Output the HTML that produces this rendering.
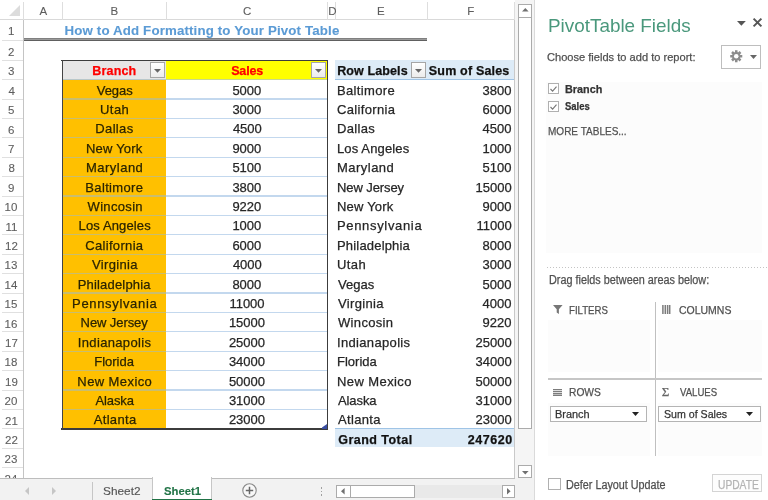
<!DOCTYPE html><html><head><meta charset="utf-8"><title>Pivot Table</title><style>
html,body{margin:0;padding:0;}
body{width:768px;height:500px;overflow:hidden;background:#fff;position:relative;font-family:"Liberation Sans",sans-serif;}
div{position:absolute;box-sizing:border-box;white-space:nowrap;}
svg{position:absolute;overflow:visible;}
.t{transform-origin:0 50%;-webkit-text-stroke:0.25px currentColor;}
#w{left:0;top:0;width:768px;height:500px;overflow:hidden;background:#fff;filter:blur(0.4px);}
</style></head><body><div id="w">
<div style="left:0.00px;top:19.00px;width:514.50px;height:1.20px;background:#d9d9d9;"></div>
<div style="left:22.90px;top:19.60px;width:1.20px;height:458.40px;background:#c4c4c4;"></div>
<svg style="left:9.00px;top:5.00px" width="12" height="12"><polygon points="11,0 11,11 0,11" fill="#dcdcdc"/></svg>
<div style="left:23.00px;top:2.00px;width:1.00px;height:17.60px;background:#dedede;"></div>
<div style="left:61.70px;top:2.00px;width:1.00px;height:17.60px;background:#dedede;"></div>
<div style="left:165.50px;top:2.00px;width:1.00px;height:17.60px;background:#dedede;"></div>
<div style="left:327.30px;top:2.00px;width:1.00px;height:17.60px;background:#dedede;"></div>
<div style="left:334.50px;top:2.00px;width:1.00px;height:17.60px;background:#dedede;"></div>
<div style="left:426.50px;top:2.00px;width:1.00px;height:17.60px;background:#dedede;"></div>
<div style="left:514.00px;top:2.00px;width:1.00px;height:17.60px;background:#dedede;"></div>
<div class="t" style="left:39.60px;top:6px;color:#5e5e5e;font-size:11.5px;line-height:11.5px;-webkit-text-stroke-width:0.1px;">A</div>
<div class="t" style="left:110.40px;top:6px;color:#5e5e5e;font-size:11.5px;line-height:11.5px;-webkit-text-stroke-width:0.1px;">B</div>
<div class="t" style="left:243.00px;top:6px;color:#5e5e5e;font-size:11.5px;line-height:11.5px;-webkit-text-stroke-width:0.1px;">C</div>
<div class="t" style="left:328.20px;top:6px;color:#5e5e5e;font-size:11.5px;line-height:11.5px;-webkit-text-stroke-width:0.1px;">D</div>
<div class="t" style="left:376.90px;top:6px;color:#5e5e5e;font-size:11.5px;line-height:11.5px;-webkit-text-stroke-width:0.1px;">E</div>
<div class="t" style="left:467.20px;top:6px;color:#5e5e5e;font-size:11.5px;line-height:11.5px;-webkit-text-stroke-width:0.1px;">F</div>
<div class="t" style="left:8.00px;top:26px;color:#5e5e5e;font-size:11.5px;line-height:11.5px;-webkit-text-stroke-width:0.1px;">1</div>
<div style="left:1.50px;top:40.35px;width:21.30px;height:1.00px;background:#e0e0e0;"></div>
<div class="t" style="left:8.00px;top:47px;color:#5e5e5e;font-size:11.5px;line-height:11.5px;-webkit-text-stroke-width:0.1px;">2</div>
<div style="left:1.50px;top:59.75px;width:21.30px;height:1.00px;background:#e0e0e0;"></div>
<div class="t" style="left:8.00px;top:66px;color:#5e5e5e;font-size:11.5px;line-height:11.5px;-webkit-text-stroke-width:0.1px;">3</div>
<div style="left:1.50px;top:79.15px;width:21.30px;height:1.00px;background:#e0e0e0;"></div>
<div class="t" style="left:8.50px;top:86px;color:#5e5e5e;font-size:11.5px;line-height:11.5px;-webkit-text-stroke-width:0.1px;">4</div>
<div style="left:1.50px;top:98.55px;width:21.30px;height:1.00px;background:#e0e0e0;"></div>
<div class="t" style="left:8.00px;top:105px;color:#5e5e5e;font-size:11.5px;line-height:11.5px;-webkit-text-stroke-width:0.1px;">5</div>
<div style="left:1.50px;top:117.95px;width:21.30px;height:1.00px;background:#e0e0e0;"></div>
<div class="t" style="left:8.00px;top:125px;color:#5e5e5e;font-size:11.5px;line-height:11.5px;-webkit-text-stroke-width:0.1px;">6</div>
<div style="left:1.50px;top:137.35px;width:21.30px;height:1.00px;background:#e0e0e0;"></div>
<div class="t" style="left:8.00px;top:144px;color:#5e5e5e;font-size:11.5px;line-height:11.5px;-webkit-text-stroke-width:0.1px;">7</div>
<div style="left:1.50px;top:156.75px;width:21.30px;height:1.00px;background:#e0e0e0;"></div>
<div class="t" style="left:8.50px;top:163px;color:#5e5e5e;font-size:11.5px;line-height:11.5px;-webkit-text-stroke-width:0.1px;">8</div>
<div style="left:1.50px;top:176.15px;width:21.30px;height:1.00px;background:#e0e0e0;"></div>
<div class="t" style="left:8.00px;top:183px;color:#5e5e5e;font-size:11.5px;line-height:11.5px;-webkit-text-stroke-width:0.1px;">9</div>
<div style="left:1.50px;top:195.55px;width:21.30px;height:1.00px;background:#e0e0e0;"></div>
<div class="t" style="left:4.50px;top:202px;color:#5e5e5e;font-size:11.5px;line-height:11.5px;-webkit-text-stroke-width:0.1px;">10</div>
<div style="left:1.50px;top:214.95px;width:21.30px;height:1.00px;background:#e0e0e0;"></div>
<div class="t" style="left:5.50px;top:222px;color:#5e5e5e;font-size:11.5px;line-height:11.5px;-webkit-text-stroke-width:0.1px;">11</div>
<div style="left:1.50px;top:234.35px;width:21.30px;height:1.00px;background:#e0e0e0;"></div>
<div class="t" style="left:5.00px;top:241px;color:#5e5e5e;font-size:11.5px;line-height:11.5px;-webkit-text-stroke-width:0.1px;">12</div>
<div style="left:1.50px;top:253.75px;width:21.30px;height:1.00px;background:#e0e0e0;"></div>
<div class="t" style="left:4.50px;top:260px;color:#5e5e5e;font-size:11.5px;line-height:11.5px;-webkit-text-stroke-width:0.1px;">13</div>
<div style="left:1.50px;top:273.15px;width:21.30px;height:1.00px;background:#e0e0e0;"></div>
<div class="t" style="left:4.50px;top:280px;color:#5e5e5e;font-size:11.5px;line-height:11.5px;-webkit-text-stroke-width:0.1px;">14</div>
<div style="left:1.50px;top:292.55px;width:21.30px;height:1.00px;background:#e0e0e0;"></div>
<div class="t" style="left:4.50px;top:299px;color:#5e5e5e;font-size:11.5px;line-height:11.5px;-webkit-text-stroke-width:0.1px;">15</div>
<div style="left:1.50px;top:311.95px;width:21.30px;height:1.00px;background:#e0e0e0;"></div>
<div class="t" style="left:4.50px;top:319px;color:#5e5e5e;font-size:11.5px;line-height:11.5px;-webkit-text-stroke-width:0.1px;">16</div>
<div style="left:1.50px;top:331.35px;width:21.30px;height:1.00px;background:#e0e0e0;"></div>
<div class="t" style="left:5.00px;top:338px;color:#5e5e5e;font-size:11.5px;line-height:11.5px;-webkit-text-stroke-width:0.1px;">17</div>
<div style="left:1.50px;top:350.75px;width:21.30px;height:1.00px;background:#e0e0e0;"></div>
<div class="t" style="left:4.50px;top:357px;color:#5e5e5e;font-size:11.5px;line-height:11.5px;-webkit-text-stroke-width:0.1px;">18</div>
<div style="left:1.50px;top:370.15px;width:21.30px;height:1.00px;background:#e0e0e0;"></div>
<div class="t" style="left:5.00px;top:377px;color:#5e5e5e;font-size:11.5px;line-height:11.5px;-webkit-text-stroke-width:0.1px;">19</div>
<div style="left:1.50px;top:389.55px;width:21.30px;height:1.00px;background:#e0e0e0;"></div>
<div class="t" style="left:4.50px;top:396px;color:#5e5e5e;font-size:11.5px;line-height:11.5px;-webkit-text-stroke-width:0.1px;">20</div>
<div style="left:1.50px;top:408.95px;width:21.30px;height:1.00px;background:#e0e0e0;"></div>
<div class="t" style="left:5.00px;top:416px;color:#5e5e5e;font-size:11.5px;line-height:11.5px;-webkit-text-stroke-width:0.1px;">21</div>
<div style="left:1.50px;top:428.35px;width:21.30px;height:1.00px;background:#e0e0e0;"></div>
<div class="t" style="left:5.00px;top:435px;color:#5e5e5e;font-size:11.5px;line-height:11.5px;-webkit-text-stroke-width:0.1px;">22</div>
<div style="left:1.50px;top:447.75px;width:21.30px;height:1.00px;background:#e0e0e0;"></div>
<div class="t" style="left:4.50px;top:454px;color:#5e5e5e;font-size:11.5px;line-height:11.5px;-webkit-text-stroke-width:0.1px;">23</div>
<div style="left:1.50px;top:467.15px;width:21.30px;height:1.00px;background:#e0e0e0;"></div>
<div class="t" style="left:4.50px;top:474px;color:#5e5e5e;font-size:11.5px;line-height:11.5px;-webkit-text-stroke-width:0.1px;">24</div>
<div style="left:514.00px;top:19.60px;width:1.00px;height:458.40px;background:#d4d4d4;"></div>
<div class="t" style="left:64.50px;top:24px;color:#5b9bd5;font-size:13.3px;line-height:13.3px;font-weight:bold;letter-spacing:0.142px;-webkit-text-stroke-width:0.1px;">How to Add Formatting to Your Pivot Table</div>
<div style="left:23.50px;top:38.00px;width:403.50px;height:1.20px;background:#808080;"></div>
<div style="left:23.50px;top:39.20px;width:403.50px;height:0.60px;background:#9a9a9a;"></div>
<div style="left:23.50px;top:39.80px;width:403.50px;height:1.40px;background:#606060;"></div>
<div style="left:62.20px;top:60.25px;width:103.80px;height:19.40px;background:#e7e6e6;"></div>
<div style="left:166.00px;top:60.25px;width:161.80px;height:19.40px;background:#ffff00;"></div>
<div class="t" style="left:92.20px;top:65px;color:#ff0000;font-size:12.5px;line-height:12.5px;font-weight:bold;letter-spacing:0.200px;">Branch</div>
<div class="t" style="left:231.20px;top:65px;color:#ff0000;font-size:12.5px;line-height:12.5px;font-weight:bold;letter-spacing:-0.175px;">Sales</div>
<div style="left:150.30px;top:62.30px;width:15px;height:15.5px;background:linear-gradient(#ffffff,#ececec);border:1px solid #a6a6a6;"></div>
<svg style="left:154.30px;top:68.60px" width="7" height="3.8"><polygon points="0,0 7,0 3.5,3.8" fill="#666"/></svg>
<div style="left:311.20px;top:62.30px;width:15px;height:15.5px;background:linear-gradient(#ffffff,#ececec);border:1px solid #a6a6a6;"></div>
<svg style="left:315.20px;top:68.60px" width="7" height="3.8"><polygon points="0,0 7,0 3.5,3.8" fill="#666"/></svg>
<div style="left:62.20px;top:79.65px;width:103.80px;height:19.70px;background:#ffc000;"></div>
<div class="t" style="left:96.70px;top:84px;color:#2b2400;font-size:13px;line-height:13px;letter-spacing:0.000px;">Vegas</div>
<div class="t" style="left:232.40px;top:84px;color:#262626;font-size:13px;line-height:13px;">5000</div>
<div style="left:62.20px;top:99.05px;width:103.80px;height:19.70px;background:#ffc000;"></div>
<div class="t" style="left:100.05px;top:103px;color:#2b2400;font-size:13px;line-height:13px;letter-spacing:0.433px;">Utah</div>
<div class="t" style="left:232.40px;top:103px;color:#262626;font-size:13px;line-height:13px;">3000</div>
<div style="left:62.20px;top:118.45px;width:103.80px;height:19.70px;background:#ffc000;"></div>
<div class="t" style="left:95.35px;top:122px;color:#2b2400;font-size:13px;line-height:13px;letter-spacing:0.340px;">Dallas</div>
<div class="t" style="left:232.90px;top:122px;color:#262626;font-size:13px;line-height:13px;">4500</div>
<div style="left:62.20px;top:137.85px;width:103.80px;height:19.70px;background:#ffc000;"></div>
<div class="t" style="left:86.05px;top:142px;color:#2b2400;font-size:13px;line-height:13px;letter-spacing:0.186px;">New York</div>
<div class="t" style="left:232.40px;top:142px;color:#262626;font-size:13px;line-height:13px;">9000</div>
<div style="left:62.20px;top:157.25px;width:103.80px;height:19.70px;background:#ffc000;"></div>
<div class="t" style="left:86.05px;top:161px;color:#2b2400;font-size:13px;line-height:13px;letter-spacing:0.471px;">Maryland</div>
<div class="t" style="left:232.40px;top:161px;color:#262626;font-size:13px;line-height:13px;">5100</div>
<div style="left:62.20px;top:176.65px;width:103.80px;height:19.70px;background:#ffc000;"></div>
<div class="t" style="left:85.35px;top:181px;color:#2b2400;font-size:13px;line-height:13px;letter-spacing:0.338px;">Baltimore</div>
<div class="t" style="left:232.40px;top:181px;color:#262626;font-size:13px;line-height:13px;">3800</div>
<div style="left:62.20px;top:196.05px;width:103.80px;height:19.70px;background:#ffc000;"></div>
<div class="t" style="left:87.55px;top:200px;color:#2b2400;font-size:13px;line-height:13px;letter-spacing:0.329px;">Wincosin</div>
<div class="t" style="left:232.40px;top:200px;color:#262626;font-size:13px;line-height:13px;">9220</div>
<div style="left:62.20px;top:215.45px;width:103.80px;height:19.70px;background:#ffc000;"></div>
<div class="t" style="left:78.55px;top:219px;color:#2b2400;font-size:13px;line-height:13px;letter-spacing:0.130px;">Los Angeles</div>
<div class="t" style="left:232.40px;top:219px;color:#262626;font-size:13px;line-height:13px;">1000</div>
<div style="left:62.20px;top:234.85px;width:103.80px;height:19.70px;background:#ffc000;"></div>
<div class="t" style="left:85.20px;top:239px;color:#2b2400;font-size:13px;line-height:13px;letter-spacing:0.333px;">California</div>
<div class="t" style="left:232.40px;top:239px;color:#262626;font-size:13px;line-height:13px;">6000</div>
<div style="left:62.20px;top:254.25px;width:103.80px;height:19.70px;background:#ffc000;"></div>
<div class="t" style="left:92.05px;top:258px;color:#2b2400;font-size:13px;line-height:13px;letter-spacing:0.329px;">Virginia</div>
<div class="t" style="left:232.90px;top:258px;color:#262626;font-size:13px;line-height:13px;">4000</div>
<div style="left:62.20px;top:273.65px;width:103.80px;height:19.70px;background:#ffc000;"></div>
<div class="t" style="left:77.70px;top:278px;color:#2b2400;font-size:13px;line-height:13px;letter-spacing:0.182px;">Philadelphia</div>
<div class="t" style="left:232.40px;top:278px;color:#262626;font-size:13px;line-height:13px;">8000</div>
<div style="left:62.20px;top:293.05px;width:103.80px;height:19.70px;background:#ffc000;"></div>
<div class="t" style="left:72.05px;top:297px;color:#2b2400;font-size:13px;line-height:13px;letter-spacing:0.664px;">Pennsylvania</div>
<div class="t" style="left:229.40px;top:297px;color:#262626;font-size:13px;line-height:13px;">11000</div>
<div style="left:62.20px;top:312.45px;width:103.80px;height:19.70px;background:#ffc000;"></div>
<div class="t" style="left:80.60px;top:316px;color:#2b2400;font-size:13px;line-height:13px;letter-spacing:-0.089px;">New Jersey</div>
<div class="t" style="left:228.90px;top:316px;color:#262626;font-size:13px;line-height:13px;">15000</div>
<div style="left:62.20px;top:331.85px;width:103.80px;height:19.70px;background:#ffc000;"></div>
<div class="t" style="left:77.85px;top:336px;color:#2b2400;font-size:13px;line-height:13px;letter-spacing:0.336px;">Indianapolis</div>
<div class="t" style="left:228.90px;top:336px;color:#262626;font-size:13px;line-height:13px;">25000</div>
<div style="left:62.20px;top:351.25px;width:103.80px;height:19.70px;background:#ffc000;"></div>
<div class="t" style="left:94.20px;top:355px;color:#2b2400;font-size:13px;line-height:13px;letter-spacing:0.000px;">Florida</div>
<div class="t" style="left:228.90px;top:355px;color:#262626;font-size:13px;line-height:13px;">34000</div>
<div style="left:62.20px;top:370.65px;width:103.80px;height:19.70px;background:#ffc000;"></div>
<div class="t" style="left:77.35px;top:375px;color:#2b2400;font-size:13px;line-height:13px;letter-spacing:0.411px;">New Mexico</div>
<div class="t" style="left:228.90px;top:375px;color:#262626;font-size:13px;line-height:13px;">50000</div>
<div style="left:62.20px;top:390.05px;width:103.80px;height:19.70px;background:#ffc000;"></div>
<div class="t" style="left:95.45px;top:394px;color:#2b2400;font-size:13px;line-height:13px;letter-spacing:-0.100px;">Alaska</div>
<div class="t" style="left:228.90px;top:394px;color:#262626;font-size:13px;line-height:13px;">31000</div>
<div style="left:62.20px;top:409.45px;width:103.80px;height:19.70px;background:#ffc000;"></div>
<div class="t" style="left:93.70px;top:413px;color:#2b2400;font-size:13px;line-height:13px;letter-spacing:0.333px;">Atlanta</div>
<div class="t" style="left:228.90px;top:413px;color:#262626;font-size:13px;line-height:13px;">23000</div>
<div style="left:62.20px;top:79.05px;width:103.80px;height:1.20px;background:#c9bd6e;"></div>
<div style="left:166.00px;top:79.05px;width:161.80px;height:1.20px;background:#c3d8ee;"></div>
<div style="left:62.20px;top:98.45px;width:103.80px;height:1.20px;background:#c9bd6e;"></div>
<div style="left:166.00px;top:98.45px;width:161.80px;height:1.20px;background:#c3d8ee;"></div>
<div style="left:62.20px;top:117.85px;width:103.80px;height:1.20px;background:#c9bd6e;"></div>
<div style="left:166.00px;top:117.85px;width:161.80px;height:1.20px;background:#c3d8ee;"></div>
<div style="left:62.20px;top:137.25px;width:103.80px;height:1.20px;background:#c9bd6e;"></div>
<div style="left:166.00px;top:137.25px;width:161.80px;height:1.20px;background:#c3d8ee;"></div>
<div style="left:62.20px;top:156.65px;width:103.80px;height:1.20px;background:#c9bd6e;"></div>
<div style="left:166.00px;top:156.65px;width:161.80px;height:1.20px;background:#c3d8ee;"></div>
<div style="left:62.20px;top:176.05px;width:103.80px;height:1.20px;background:#c9bd6e;"></div>
<div style="left:166.00px;top:176.05px;width:161.80px;height:1.20px;background:#c3d8ee;"></div>
<div style="left:62.20px;top:195.45px;width:103.80px;height:1.20px;background:#c9bd6e;"></div>
<div style="left:166.00px;top:195.45px;width:161.80px;height:1.20px;background:#c3d8ee;"></div>
<div style="left:62.20px;top:214.85px;width:103.80px;height:1.20px;background:#c9bd6e;"></div>
<div style="left:166.00px;top:214.85px;width:161.80px;height:1.20px;background:#c3d8ee;"></div>
<div style="left:62.20px;top:234.25px;width:103.80px;height:1.20px;background:#c9bd6e;"></div>
<div style="left:166.00px;top:234.25px;width:161.80px;height:1.20px;background:#c3d8ee;"></div>
<div style="left:62.20px;top:253.65px;width:103.80px;height:1.20px;background:#c9bd6e;"></div>
<div style="left:166.00px;top:253.65px;width:161.80px;height:1.20px;background:#c3d8ee;"></div>
<div style="left:62.20px;top:273.05px;width:103.80px;height:1.20px;background:#c9bd6e;"></div>
<div style="left:166.00px;top:273.05px;width:161.80px;height:1.20px;background:#c3d8ee;"></div>
<div style="left:62.20px;top:292.45px;width:103.80px;height:1.20px;background:#c9bd6e;"></div>
<div style="left:166.00px;top:292.45px;width:161.80px;height:1.20px;background:#c3d8ee;"></div>
<div style="left:62.20px;top:311.85px;width:103.80px;height:1.20px;background:#c9bd6e;"></div>
<div style="left:166.00px;top:311.85px;width:161.80px;height:1.20px;background:#c3d8ee;"></div>
<div style="left:62.20px;top:331.25px;width:103.80px;height:1.20px;background:#c9bd6e;"></div>
<div style="left:166.00px;top:331.25px;width:161.80px;height:1.20px;background:#c3d8ee;"></div>
<div style="left:62.20px;top:350.65px;width:103.80px;height:1.20px;background:#c9bd6e;"></div>
<div style="left:166.00px;top:350.65px;width:161.80px;height:1.20px;background:#c3d8ee;"></div>
<div style="left:62.20px;top:370.05px;width:103.80px;height:1.20px;background:#c9bd6e;"></div>
<div style="left:166.00px;top:370.05px;width:161.80px;height:1.20px;background:#c3d8ee;"></div>
<div style="left:62.20px;top:389.45px;width:103.80px;height:1.20px;background:#c9bd6e;"></div>
<div style="left:166.00px;top:389.45px;width:161.80px;height:1.20px;background:#c3d8ee;"></div>
<div style="left:62.20px;top:408.85px;width:103.80px;height:1.20px;background:#c9bd6e;"></div>
<div style="left:166.00px;top:408.85px;width:161.80px;height:1.20px;background:#c3d8ee;"></div>
<div style="left:62.20px;top:79.05px;width:103.80px;height:1.20px;background:#b9c7c9;"></div>
<div style="left:166.00px;top:79.05px;width:161.80px;height:1.20px;background:#c8d890;"></div>
<div style="left:61.40px;top:59.75px;width:266.90px;height:1.70px;background:#3c3c3c;"></div>
<div style="left:61.40px;top:427.95px;width:266.90px;height:1.60px;background:#3c3c3c;"></div>
<div style="left:61.50px;top:59.75px;width:1.40px;height:369.80px;background:#444;"></div>
<div style="left:326.50px;top:59.75px;width:1.80px;height:369.80px;background:#3c3c3c;"></div>
<svg style="left:322.40px;top:423.85px" width="5" height="5"><polygon points="5,0 5,5 0,5 0,3.5" fill="#3a4fa3"/></svg>
<div style="left:334.50px;top:59.95px;width:180.00px;height:19.70px;background:#ddebf7;"></div>
<div style="left:334.50px;top:78.95px;width:180.00px;height:1.30px;background:#9fc4e6;"></div>
<div class="t" style="left:337.20px;top:65px;color:#111;font-size:12.5px;line-height:12.5px;font-weight:bold;letter-spacing:0.111px;">Row Labels</div>
<div class="t" style="left:428.80px;top:65px;color:#111;font-size:12.5px;line-height:12.5px;font-weight:bold;letter-spacing:0.182px;">Sum of Sales</div>
<div style="left:411.00px;top:62.30px;width:15px;height:15.5px;background:linear-gradient(#ffffff,#ececec);border:1px solid #a6a6a6;"></div>
<svg style="left:415.00px;top:68.60px" width="7" height="3.8"><polygon points="0,0 7,0 3.5,3.8" fill="#666"/></svg>
<div class="t" style="left:337.00px;top:84px;color:#262626;font-size:13px;line-height:13px;letter-spacing:0.338px;">Baltimore</div>
<div class="t" style="left:482.50px;top:84px;color:#262626;font-size:13px;line-height:13px;">3800</div>
<div class="t" style="left:337.00px;top:103px;color:#262626;font-size:13px;line-height:13px;letter-spacing:0.333px;">California</div>
<div class="t" style="left:482.50px;top:103px;color:#262626;font-size:13px;line-height:13px;">6000</div>
<div class="t" style="left:337.00px;top:122px;color:#262626;font-size:13px;line-height:13px;letter-spacing:0.340px;">Dallas</div>
<div class="t" style="left:482.50px;top:122px;color:#262626;font-size:13px;line-height:13px;">4500</div>
<div class="t" style="left:337.00px;top:142px;color:#262626;font-size:13px;line-height:13px;letter-spacing:0.130px;">Los Angeles</div>
<div class="t" style="left:482.50px;top:142px;color:#262626;font-size:13px;line-height:13px;">1000</div>
<div class="t" style="left:337.00px;top:161px;color:#262626;font-size:13px;line-height:13px;letter-spacing:0.471px;">Maryland</div>
<div class="t" style="left:482.50px;top:161px;color:#262626;font-size:13px;line-height:13px;">5100</div>
<div class="t" style="left:337.00px;top:181px;color:#262626;font-size:13px;line-height:13px;letter-spacing:-0.089px;">New Jersey</div>
<div class="t" style="left:475.50px;top:181px;color:#262626;font-size:13px;line-height:13px;">15000</div>
<div class="t" style="left:337.00px;top:200px;color:#262626;font-size:13px;line-height:13px;letter-spacing:0.186px;">New York</div>
<div class="t" style="left:482.50px;top:200px;color:#262626;font-size:13px;line-height:13px;">9000</div>
<div class="t" style="left:337.00px;top:219px;color:#262626;font-size:13px;line-height:13px;letter-spacing:0.664px;">Pennsylvania</div>
<div class="t" style="left:476.50px;top:219px;color:#262626;font-size:13px;line-height:13px;">11000</div>
<div class="t" style="left:337.00px;top:239px;color:#262626;font-size:13px;line-height:13px;letter-spacing:0.182px;">Philadelphia</div>
<div class="t" style="left:482.50px;top:239px;color:#262626;font-size:13px;line-height:13px;">8000</div>
<div class="t" style="left:337.00px;top:258px;color:#262626;font-size:13px;line-height:13px;letter-spacing:0.433px;">Utah</div>
<div class="t" style="left:482.50px;top:258px;color:#262626;font-size:13px;line-height:13px;">3000</div>
<div class="t" style="left:338.00px;top:278px;color:#262626;font-size:13px;line-height:13px;letter-spacing:0.000px;">Vegas</div>
<div class="t" style="left:482.50px;top:278px;color:#262626;font-size:13px;line-height:13px;">5000</div>
<div class="t" style="left:338.00px;top:297px;color:#262626;font-size:13px;line-height:13px;letter-spacing:0.329px;">Virginia</div>
<div class="t" style="left:482.50px;top:297px;color:#262626;font-size:13px;line-height:13px;">4000</div>
<div class="t" style="left:338.00px;top:316px;color:#262626;font-size:13px;line-height:13px;letter-spacing:0.329px;">Wincosin</div>
<div class="t" style="left:482.50px;top:316px;color:#262626;font-size:13px;line-height:13px;">9220</div>
<div class="t" style="left:337.00px;top:336px;color:#262626;font-size:13px;line-height:13px;letter-spacing:0.336px;">Indianapolis</div>
<div class="t" style="left:475.50px;top:336px;color:#262626;font-size:13px;line-height:13px;">25000</div>
<div class="t" style="left:337.00px;top:355px;color:#262626;font-size:13px;line-height:13px;letter-spacing:0.000px;">Florida</div>
<div class="t" style="left:475.50px;top:355px;color:#262626;font-size:13px;line-height:13px;">34000</div>
<div class="t" style="left:337.00px;top:375px;color:#262626;font-size:13px;line-height:13px;letter-spacing:0.411px;">New Mexico</div>
<div class="t" style="left:475.50px;top:375px;color:#262626;font-size:13px;line-height:13px;">50000</div>
<div class="t" style="left:338.00px;top:394px;color:#262626;font-size:13px;line-height:13px;letter-spacing:-0.100px;">Alaska</div>
<div class="t" style="left:475.50px;top:394px;color:#262626;font-size:13px;line-height:13px;">31000</div>
<div class="t" style="left:338.00px;top:413px;color:#262626;font-size:13px;line-height:13px;letter-spacing:0.333px;">Atlanta</div>
<div class="t" style="left:475.50px;top:413px;color:#262626;font-size:13px;line-height:13px;">23000</div>
<div style="left:334.50px;top:428.85px;width:180.00px;height:18.60px;background:#ddebf7;"></div>
<div style="left:334.50px;top:428.25px;width:180.00px;height:1.20px;background:#9fc4e6;"></div>
<div class="t" style="left:338.20px;top:434px;color:#111;font-size:12.5px;line-height:12.5px;font-weight:bold;letter-spacing:0.470px;">Grand Total</div>
<div class="t" style="left:467.80px;top:434px;color:#111;font-size:12.5px;line-height:12.5px;font-weight:bold;letter-spacing:0.540px;">247620</div>
<div style="left:0.00px;top:478.00px;width:535.00px;height:22.00px;background:#f2f2f2;"></div>
<div style="left:0.00px;top:477.70px;width:515.00px;height:1.30px;background:#bdbdbd;"></div>
<div style="left:151.50px;top:477.30px;width:60.50px;height:22.70px;background:#fff;border-left:1px solid #c6c6c6;border-right:1px solid #c6c6c6;"></div>
<div style="left:151.50px;top:498.90px;width:60.50px;height:1.10px;background:#217346;"></div>
<div style="left:92.00px;top:481.50px;width:1.00px;height:18.50px;background:#c6c6c6;"></div>
<div class="t" style="left:103.47px;top:486px;color:#555;font-size:11.5px;line-height:11.5px;transform:scaleX(1.0286);-webkit-text-stroke-width:0.15px;">Sheet2</div>
<div class="t" style="left:163.80px;top:486px;color:#217346;font-size:11.5px;line-height:11.5px;font-weight:bold;transform:scaleX(0.9842);-webkit-text-stroke-width:0.1px;">Sheet1</div>
<svg style="left:24.50px;top:486.50px" width="4" height="8"><polygon points="4,0 4,8 0,4" fill="#c6c6c6"/></svg>
<svg style="left:51.50px;top:486.50px" width="4" height="8"><polygon points="0,0 0,8 4,4" fill="#c6c6c6"/></svg>
<svg style="left:242.00px;top:483.20px" width="15" height="15"><circle cx="7.5" cy="7.5" r="6.7" fill="#f8f8f8" stroke="#8a8a8a" stroke-width="1.1"/><path d="M3.8 7.5H11.2M7.5 3.8V11.2" stroke="#686868" stroke-width="1.5" fill="none"/></svg>
<div style="left:320.50px;top:487.00px;width:1.80px;height:1.80px;background:#a0a0a0;"></div>
<div style="left:320.50px;top:490.50px;width:1.80px;height:1.80px;background:#a0a0a0;"></div>
<div style="left:320.50px;top:494.00px;width:1.80px;height:1.80px;background:#a0a0a0;"></div>
<div style="left:336.00px;top:484.80px;width:179.00px;height:13.00px;background:#e9e9e9;"></div>
<div style="left:336.00px;top:484.80px;width:14.50px;height:13.00px;background:#fff;border:1px solid #ababab;"></div>
<div style="left:350.00px;top:484.80px;width:64.50px;height:13.00px;background:#fff;border:1px solid #ababab;"></div>
<div style="left:501.50px;top:484.80px;width:13.50px;height:13.00px;background:#fff;border:1px solid #ababab;"></div>
<svg style="left:341.20px;top:488.20px" width="3.6" height="6.4"><polygon points="3.6,0 3.6,6.4 0,3.2" fill="#707070"/></svg>
<svg style="left:506.80px;top:488.20px" width="3.6" height="6.4"><polygon points="0,0 0,6.4 3.6,3.2" fill="#707070"/></svg>
<div style="left:515.00px;top:0.00px;width:20.00px;height:478.00px;background:#f5f5f5;"></div>
<div style="left:513.90px;top:19.60px;width:1.20px;height:458.40px;background:#c9c9c9;"></div>
<div style="left:518.20px;top:3.50px;width:14.00px;height:14.00px;background:#fff;border:1px solid #ababab;"></div>
<div style="left:518.20px;top:16.50px;width:14.00px;height:412.00px;background:#fff;border:1px solid #ababab;"></div>
<div style="left:518.20px;top:465.00px;width:14.00px;height:13.00px;background:#fff;border:1px solid #ababab;"></div>
<svg style="left:521.90px;top:8.40px" width="6.6" height="3.5"><polygon points="0,3.5 6.6,3.5 3.3,0" fill="#707070"/></svg>
<svg style="left:521.90px;top:470.70px" width="6.6" height="3.5"><polygon points="0,0 6.6,0 3.3,3.5" fill="#707070"/></svg>
<div style="left:534.20px;top:0.00px;width:1.00px;height:500.00px;background:#dadada;"></div>
<div style="left:535.20px;top:0.00px;width:233.00px;height:500.00px;background:#fff;"></div>
<div class="t" style="left:547.78px;top:17px;color:#4a987c;font-size:18.5px;line-height:18.5px;transform:scaleX(1.0203);-webkit-text-stroke-width:0px;">PivotTable Fields</div>
<svg style="left:737.20px;top:21.00px" width="9" height="5"><polygon points="0,0 8.8,0 4.4,4.7" fill="#555"/></svg>
<svg style="left:753.30px;top:18.30px" width="9" height="9"><path d="M0.6 0.6L8.4 8.4M8.4 0.6L0.6 8.4" stroke="#555" stroke-width="2" fill="none"/></svg>
<div class="t" style="left:546.84px;top:52px;color:#505050;font-size:11.5px;line-height:11.5px;transform:scaleX(0.9638);">Choose fields to add to report:</div>
<div style="left:720.60px;top:44.80px;width:40.80px;height:24.40px;background:#fff;border:1.3px solid #bebebe;"></div>
<svg style="left:729.7px;top:50.2px" width="12.5" height="12.5" viewBox="-5.5 -5.5 11 11"><g fill="#8c8c8c"><circle r="3.7"/><rect x="-1.1" y="-5.3" width="2.2" height="3" transform="rotate(0)"/><rect x="-1.1" y="-5.3" width="2.2" height="3" transform="rotate(45)"/><rect x="-1.1" y="-5.3" width="2.2" height="3" transform="rotate(90)"/><rect x="-1.1" y="-5.3" width="2.2" height="3" transform="rotate(135)"/><rect x="-1.1" y="-5.3" width="2.2" height="3" transform="rotate(180)"/><rect x="-1.1" y="-5.3" width="2.2" height="3" transform="rotate(225)"/><rect x="-1.1" y="-5.3" width="2.2" height="3" transform="rotate(270)"/><rect x="-1.1" y="-5.3" width="2.2" height="3" transform="rotate(315)"/></g><circle r="2.0" fill="#fff"/></svg>
<svg style="left:750.00px;top:55.20px" width="7" height="4"><polygon points="0,0 7,0 3.5,3.9" fill="#666"/></svg>
<div style="left:545.80px;top:81.50px;width:216.20px;height:171.30px;background:#fcfcfc;"></div>
<div style="left:547.60px;top:83.30px;width:11.50px;height:11.00px;background:#fff;border:1px solid #b0b0b0;"></div>
<svg style="left:549.80px;top:85.80px" width="7" height="6"><path d="M0.5 3L2.6 5.2L6.5 0.6" stroke="#777" stroke-width="1.1" fill="none"/></svg>
<div style="left:547.60px;top:101.00px;width:11.50px;height:11.00px;background:#fff;border:1px solid #b0b0b0;"></div>
<svg style="left:549.80px;top:103.50px" width="7" height="6"><path d="M0.5 3L2.6 5.2L6.5 0.6" stroke="#777" stroke-width="1.1" fill="none"/></svg>
<div class="t" style="left:564.92px;top:84px;color:#333;font-size:11px;line-height:11px;font-weight:bold;transform:scaleX(0.9833);">Branch</div>
<div class="t" style="left:565.40px;top:101px;color:#333;font-size:11px;line-height:11px;font-weight:bold;transform:scaleX(0.8621);">Sales</div>
<div class="t" style="left:547.53px;top:126px;color:#505050;font-size:11.5px;line-height:11.5px;transform:scaleX(0.8708);">MORE TABLES...</div>
<div style="left:547.40px;top:267.00px;width:220.60px;height:1.00px;background:repeating-linear-gradient(90deg,#c4c4c4 0 1px,transparent 1px 3px);"></div>
<div class="t" style="left:549.40px;top:274px;color:#505050;font-size:12px;line-height:12px;transform:scaleX(0.9029);">Drag fields between areas below:</div>
<div style="left:548.40px;top:320.20px;width:101.20px;height:52.20px;background:#fcfcfc;"></div>
<div style="left:658.30px;top:320.20px;width:103.70px;height:52.20px;background:#fcfcfc;"></div>
<div style="left:548.40px;top:403.00px;width:101.20px;height:52.50px;background:#fcfcfc;"></div>
<div style="left:658.30px;top:403.00px;width:103.70px;height:52.50px;background:#fcfcfc;"></div>
<div style="left:654.70px;top:301.50px;width:1.00px;height:154.00px;background:#c0c0c0;"></div>
<div style="left:548.40px;top:378.20px;width:213.60px;height:1.40px;background:#c6c6c6;"></div>
<div class="t" style="left:568.76px;top:305px;color:#505050;font-size:11.5px;line-height:11.5px;transform:scaleX(0.8378);">FILTERS</div>
<div class="t" style="left:678.59px;top:305px;color:#505050;font-size:11.5px;line-height:11.5px;transform:scaleX(0.9107);">COLUMNS</div>
<div class="t" style="left:568.71px;top:387px;color:#505050;font-size:11.5px;line-height:11.5px;transform:scaleX(0.8912);">ROWS</div>
<div class="t" style="left:679.80px;top:387px;color:#505050;font-size:11.5px;line-height:11.5px;transform:scaleX(0.8341);">VALUES</div>
<svg style="left:552.80px;top:305.00px" width="10" height="9"><path d="M0 0H9.6L5.9 4.2V9L3.7 7.6V4.2Z" fill="#777"/></svg>
<svg style="left:661.70px;top:305.00px" width="9" height="9"><path d="M0.9 0V9M3.3 0V9M5.6 0V9M7.7 0V9" stroke="#7c7c7c" stroke-width="1.5" fill="none"/></svg>
<svg style="left:553.40px;top:388.60px" width="9" height="7"><path d="M0 0.7H9M0 2.6H9M0 4.5H9M0 6.4H9" stroke="#7c7c7c" stroke-width="1.25" fill="none"/></svg>
<div class="t" style="left:661.80px;top:385px;color:#666;font-size:13px;line-height:13px;font-family:'Liberation Serif',serif;">Σ</div>
<div style="left:549.50px;top:405.70px;width:97.80px;height:16.40px;background:#fff;border:1px solid #b4b4b4;"></div>
<div style="left:658.20px;top:405.70px;width:103.00px;height:16.40px;background:#fff;border:1px solid #b4b4b4;"></div>
<div class="t" style="left:555.25px;top:409px;color:#333;font-size:11.5px;line-height:11.5px;transform:scaleX(0.9514);">Branch</div>
<div class="t" style="left:664.28px;top:409px;color:#333;font-size:11.5px;line-height:11.5px;transform:scaleX(0.9224);">Sum of Sales</div>
<svg style="left:632.00px;top:411.50px" width="7" height="4"><polygon points="0,0 7,0 3.5,4" fill="#222"/></svg>
<svg style="left:745.80px;top:411.50px" width="7" height="4"><polygon points="0,0 7,0 3.5,4" fill="#222"/></svg>
<div style="left:548.30px;top:478.30px;width:12.50px;height:11.50px;background:#fff;border:1px solid #b0b0b0;"></div>
<div class="t" style="left:566.30px;top:479px;color:#505050;font-size:12px;line-height:12px;transform:scaleX(0.8991);">Defer Layout Update</div>
<div style="left:712.20px;top:473.60px;width:50.00px;height:18.60px;background:#fdfdfd;border:1px solid #d4d4d4;"></div>
<div class="t" style="left:717.75px;top:479px;color:#b4b4b4;font-size:12px;line-height:12px;transform:scaleX(0.8522);">UPDATE</div>
</div></body></html>
